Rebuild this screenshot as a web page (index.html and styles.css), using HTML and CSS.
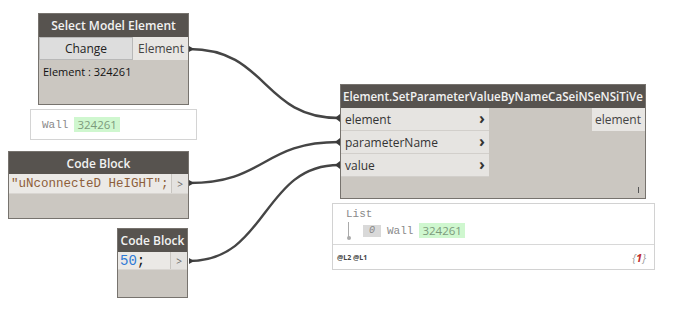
FILE: index.html
```html
<!DOCTYPE html>
<html>
<head>
<meta charset="utf-8">
<link rel="stylesheet" href="styles.css">
</head>
<body>
<div class="canvas">
  <svg class="wires" width="700" height="334" viewBox="0 0 700 334">
    <g fill="none" stroke="#454545" stroke-width="2.4">
      <path d="M189,49 C268,49 262,118 339,118"/>
      <path d="M189,183 C266,183 262,142 339,142"/>
      <path d="M189,261 C268,261 262,165 339,165"/>
    </g>
    <g fill="#3a3a3a">
      <polygon points="189,46 194,49 189,52"/>
      <polygon points="189,180 194,183 189,186"/>
      <polygon points="189,258 194,261 189,264"/>
      <polygon points="340,114 335,118 340,122"/>
      <polygon points="340,138 335,142 340,146"/>
      <polygon points="340,161 335,165 340,169"/>
    </g>
  </svg>

  <div class="node n-select">
    <div class="hdr">Select Model Element</div>
    <div class="row">
      <div class="btn">Change</div>
      <div class="outport">Element</div>
    </div>
    <div class="info">Element : 324261</div>
  </div>

  <div class="watch w1">
    <span class="mono grey">Wall</span>
    <span class="val">324261</span>
  </div>

  <div class="node n-code1">
    <div class="hdr">Code Block</div>
    <div class="coderow">
      <div class="code str">"uNconnecteD HeIGHT";</div>
      <div class="cport">&gt;</div>
    </div>
  </div>

  <div class="node n-code2">
    <div class="hdr">Code Block</div>
    <div class="coderow">
      <div class="code"><span class="num">50</span>;</div>
      <div class="cport">&gt;</div>
    </div>
  </div>

  <div class="node n-set">
    <div class="hdr">Element.SetParameterValueByNameCaSeiNSeNSiTiVe</div>
    <div class="setbody">
      <div class="inputs">
        <div class="inrow"><span>element</span><span class="chev">&rsaquo;</span></div>
        <div class="inrow"><span>parameterName</span><span class="chev">&rsaquo;</span></div>
        <div class="inrow"><span>value</span><span class="chev">&rsaquo;</span></div>
      </div>
      <div class="outputs">
        <div class="outlbl">element</div>
      </div>
    </div>
    <div class="grip"></div>
  </div>

  <div class="watch2">
    <div class="wbody">
      <div class="mono grey">List</div>
      <div class="tree">
        <div class="branch"><span class="dot"></span></div>
        <div class="item">
          <span class="idx">0</span>
          <span class="mono grey">Wall</span>
          <span class="val">324261</span>
        </div>
      </div>
    </div>
    <div class="wfoot">
      <span class="levels">@L2 @L1</span>
      <span class="count">{<em>1</em>}</span>
    </div>
  </div>
</div>
</body>
</html>
```

FILE: styles.css
```css
html, body {
  margin: 0;
  padding: 0;
  background: #ffffff;
}
.canvas {
  position: relative;
  width: 700px;
  height: 334px;
  overflow: hidden;
  font-family: "Open Sans", "Noto Sans", sans-serif;
}
.wires {
  position: absolute;
  left: 0;
  top: 0;
}
.node {
  position: absolute;
  box-sizing: border-box;
  background: #cbc7c1;
  border: 1px solid #77736e;
  display: flex;
  flex-direction: column;
}
.hdr {
  background: #57534f;
  color: #f2f2f2;
  font-weight: 600;
  font-size: 12px;
  text-align: center;
  white-space: nowrap;
  overflow: hidden;
  display: flex;
  align-items: center;
  justify-content: center;
  flex: none;
}
.n-select {
  left: 38px;
  top: 13px;
  width: 151px;
  height: 92px;
}
.n-select .hdr { height: 23px; }
.n-select .row {
  display: flex;
  height: 23px;
}
.btn {
  width: 94px;
  box-sizing: border-box;
  background: #dddddd;
  border: 1px solid #b8b8b8;
  font-size: 12px;
  color: #222;
  display: flex;
  align-items: center;
  justify-content: center;
}
.outport {
  flex: 1;
  background: #e8e6e3;
  color: #444;
  font-size: 12px;
  display: flex;
  align-items: center;
  justify-content: flex-end;
  padding-right: 4px;
}
.info {
  font-size: 11px;
  color: #111;
  padding: 4px 0 0 4px;
}
.watch {
  position: absolute;
  box-sizing: border-box;
  left: 30px;
  top: 109px;
  width: 167px;
  height: 31px;
  border: 1px solid #d4d4d4;
  background: #fff;
  display: flex;
  align-items: center;
  padding-left: 11px;
  gap: 6px;
}
.mono {
  font-family: "Liberation Mono", "DejaVu Sans Mono", monospace;
  font-size: 11px;
}
.grey { color: #8a8a8a; }
.val {
  background: #cff7cf;
  color: #7c9a7c;
  font-size: 11.5px;
  padding: 0 3px;
  line-height: 15px;
}
.n-code1 {
  left: 8px;
  top: 151px;
  width: 181px;
  height: 68px;
}
.n-code1 .hdr { height: 22px; }
.n-code2 {
  left: 117px;
  top: 228px;
  width: 71px;
  height: 70px;
}
.n-code2 .hdr { height: 23px; font-size: 12px; }
.coderow {
  display: flex;
  background: #ebe9e6;
  border-bottom: 1px solid #d9d6d2;
}
.n-code1 .coderow { height: 19px; }
.n-code2 .coderow { height: 17px; }
.code {
  flex: 1;
  font-family: "Liberation Mono", "DejaVu Sans Mono", monospace;
  font-size: 12.5px;
  color: #111;
  display: flex;
  align-items: center;
  padding-left: 2px;
  white-space: nowrap;
}
.code.str { color: #8d5e3a; }
.num { color: #2f7bd6; }
.n-code2 .code { font-size: 14px; }
.cport {
  width: 16px;
  border-left: 1px solid #c8c5c0;
  background: #e4e2df;
  color: #666;
  font-size: 10px;
  display: flex;
  align-items: center;
  justify-content: center;
}
.n-set {
  left: 340px;
  top: 84px;
  width: 306px;
  height: 115px;
}
.n-set .hdr { height: 23px; font-size: 11.6px; }
.setbody {
  display: flex;
  justify-content: space-between;
}
.inputs {
  width: 148px;
  display: flex;
  flex-direction: column;
}
.inrow {
  height: 23px;
  box-sizing: border-box;
  background: #e6e4e1;
  border-bottom: 1px solid #d2cfcb;
  display: flex;
  align-items: center;
  justify-content: space-between;
  padding: 0 4px 0 4px;
  font-size: 12px;
  color: #333;
}
.chev {
  font-weight: 700;
  font-size: 16px;
  color: #333;
  line-height: 1;
  margin-top: -3px;
}
.outlbl {
  width: 53px;
  height: 23px;
  background: #e8e6e3;
  font-size: 12px;
  color: #444;
  display: flex;
  align-items: center;
  justify-content: flex-end;
  padding-right: 4px;
  box-sizing: border-box;
}
.grip {
  position: absolute;
  right: 6px;
  bottom: 5px;
  width: 1px;
  height: 6px;
  background: #555;
}
.watch2 {
  position: absolute;
  left: 332px;
  top: 203px;
  width: 323px;
  height: 67px;
  box-sizing: border-box;
  border: 1px solid #d2d2d2;
  background: #fff;
  display: flex;
  flex-direction: column;
}
.wbody {
  height: 41px;
  box-sizing: border-box;
  border-bottom: 1px solid #d8d8d8;
  padding: 4px 0 0 13px;
}
.wbody > .mono { line-height: 13px; }
.tree {
  display: flex;
  align-items: flex-start;
}
.branch {
  position: relative;
  width: 1px;
  height: 16px;
  background: #aaa;
  margin: 1px 0 0 2px;
}
.dot {
  position: absolute;
  left: -1.5px;
  bottom: -2px;
  width: 4px;
  height: 4px;
  border-radius: 50%;
  background: #aaa;
}
.item {
  display: flex;
  align-items: center;
  margin: 2px 0 0 14px;
  gap: 6px;
}
.idx {
  background: #d9d9d9;
  color: #888;
  font-family: "Liberation Mono", monospace;
  font-style: italic;
  font-size: 10px;
  width: 18px;
  text-align: center;
  line-height: 12px;
}
.wfoot {
  flex: 1;
  display: flex;
  align-items: center;
  justify-content: space-between;
  padding: 0 8px 0 4px;
}
.levels {
  font-size: 7px;
  font-weight: 700;
  color: #444;
}
.count {
  font-style: italic;
  font-size: 11px;
  color: #999;
}
.count em { color: #c03030; font-weight: 700; }
```
